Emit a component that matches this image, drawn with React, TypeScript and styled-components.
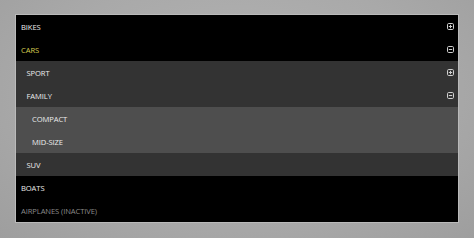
import React from "react"
import styled, { createGlobalStyle } from "styled-components"

type Item = {
  label: string
  children?: Item[]
  open?: boolean
  active?: boolean
  inactive?: boolean
}

const menu: Item[] = [
  { label: "Bikes", children: [] },
  {
    label: "Cars",
    active: true,
    open: true,
    children: [
      { label: "Sport", children: [] },
      {
        label: "Family",
        open: true,
        children: [{ label: "Compact" }, { label: "Mid-size" }],
      },
      { label: "SUV" },
    ],
  },
  { label: "Boats" },
  { label: "Airplanes (inactive)", inactive: true },
]

const levelBg = ["#000000", "#333333", "#4e4e4e"]

const GlobalStyle = createGlobalStyle`
  html, body {
    margin: 0;
    padding: 0;
  }
  body {
    width: 474px;
    height: 238px;
    overflow: hidden;
    background: radial-gradient(ellipse at 50% 40%, #b4b4b4 0%, #a9a9a9 60%, #9e9e9e 100%);
    font-family: "Open Sans", "Liberation Sans", sans-serif;
  }
`

const Page = styled.div`
  box-sizing: border-box;
  padding: 15px 16px 0 16px;
`

const Panel = styled.ul`
  box-sizing: border-box;
  margin: 0;
  padding: 0;
  list-style: none;
  width: 442px;
  background: #000;
  box-shadow: 0 0 0 1px #bababa;
`

const SubList = styled.ul`
  margin: 0;
  padding: 0;
  list-style: none;
`

const Row = styled.div<{ $level: number; $active?: boolean; $inactive?: boolean }>`
  box-sizing: border-box;
  display: flex;
  align-items: center;
  justify-content: space-between;
  height: 23px;
  padding: 0 4px 0 ${p => 5 + p.$level * 5.5}px;
  background: ${p => levelBg[p.$level]};
  color: ${p => (p.$active ? "#d6cc50" : p.$inactive ? "#8a8a8a" : "#ececec")};
  font-size: 7.6px;
  font-weight: 400;
  letter-spacing: -0.1px;
  text-transform: uppercase;
`

const Toggle = ({ open }: { open?: boolean }) => (
  <svg width="7" height="7" viewBox="0 0 7 7">
    <rect x="0.5" y="0.5" width="6" height="6" rx="1.2" fill="none" stroke="#cfcfcf" strokeWidth="1" />
    <line x1="1.8" y1="3.5" x2="5.2" y2="3.5" stroke="#cfcfcf" strokeWidth="1" />
    {!open && <line x1="3.5" y1="1.8" x2="3.5" y2="5.2" stroke="#cfcfcf" strokeWidth="1" />}
  </svg>
)

const Node = ({ item, level }: { item: Item; level: number }) => (
  <li>
    <Row $level={level} $active={item.active} $inactive={item.inactive}>
      <span>{item.label}</span>
      {item.children && level < 2 && <Toggle open={item.open} />}
    </Row>
    {item.open && item.children && (
      <SubList>
        {item.children.map(c => (
          <Node key={c.label} item={c} level={level + 1} />
        ))}
      </SubList>
    )}
  </li>
)

export default function App() {
  return (
    <>
      <GlobalStyle />
      <Page>
        <Panel>
          {menu.map(m => (
            <Node key={m.label} item={m} level={0} />
          ))}
        </Panel>
      </Page>
    </>
  )
}
